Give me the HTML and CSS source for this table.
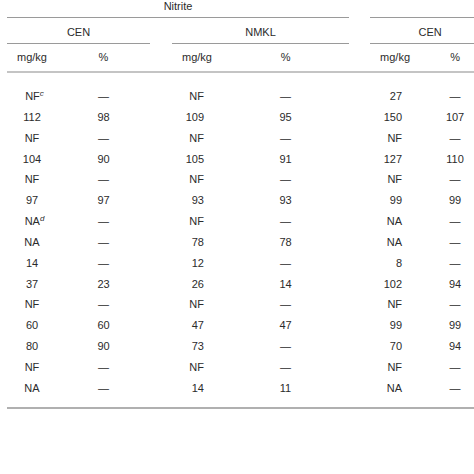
FILE: index.html
```html
<!DOCTYPE html>
<html>
<head>
<meta charset="utf-8">
<link rel="stylesheet" href="styles.css">
</head>
<body>
<div class="frame">
<table class="tbl">
  <colgroup>
    <col class="w-a"><col class="w-b"><col class="w-gap1"><col class="w-a"><col class="w-d"><col class="w-gap2"><col class="w-a"><col class="w-f">
  </colgroup>
  <thead>
    <tr class="r1">
      <th colspan="5" class="ruled">Nitrite</th>
      <th class="gap"></th>
      <th colspan="2" class="ruled"></th>
    </tr>
    <tr class="r2">
      <th colspan="2" class="ruled">CEN</th>
      <th class="gap"></th>
      <th colspan="2" class="ruled">NMKL</th>
      <th class="gap"></th>
      <th colspan="2" class="ruled">CEN</th>
    </tr>
    <tr class="r3">
      <th>mg/kg</th><th>%</th><th></th><th>mg/kg</th><th>%</th><th></th><th>mg/kg</th><th>%</th>
    </tr>
  </thead>
  <tbody>
    <tr><td>NF<sup class="fn">c</sup></td><td>—</td><td></td><td class="rt">NF</td><td>—</td><td></td><td class="rt">27</td><td>—</td></tr>
    <tr><td>112</td><td>98</td><td></td><td class="rt">109</td><td>95</td><td></td><td class="rt">150</td><td>107</td></tr>
    <tr><td>NF</td><td>—</td><td></td><td class="rt">NF</td><td>—</td><td></td><td class="rt">NF</td><td>—</td></tr>
    <tr><td>104</td><td>90</td><td></td><td class="rt">105</td><td>91</td><td></td><td class="rt">127</td><td>110</td></tr>
    <tr><td>NF</td><td>—</td><td></td><td class="rt">NF</td><td>—</td><td></td><td class="rt">NF</td><td>—</td></tr>
    <tr><td>97</td><td>97</td><td></td><td class="rt">93</td><td>93</td><td></td><td class="rt">99</td><td>99</td></tr>
    <tr><td>NA<sup class="fn">d</sup></td><td>—</td><td></td><td class="rt">NF</td><td>—</td><td></td><td class="rt">NA</td><td>—</td></tr>
    <tr><td>NA</td><td>—</td><td></td><td class="rt">78</td><td>78</td><td></td><td class="rt">NA</td><td>—</td></tr>
    <tr><td>14</td><td>—</td><td></td><td class="rt">12</td><td>—</td><td></td><td class="rt">8</td><td>—</td></tr>
    <tr><td>37</td><td>23</td><td></td><td class="rt">26</td><td>14</td><td></td><td class="rt">102</td><td>94</td></tr>
    <tr><td>NF</td><td>—</td><td></td><td class="rt">NF</td><td>—</td><td></td><td class="rt">NF</td><td>—</td></tr>
    <tr><td>60</td><td>60</td><td></td><td class="rt">47</td><td>47</td><td></td><td class="rt">99</td><td>99</td></tr>
    <tr><td>80</td><td>90</td><td></td><td class="rt">73</td><td>—</td><td></td><td class="rt">70</td><td>94</td></tr>
    <tr><td>NF</td><td>—</td><td></td><td class="rt">NF</td><td>—</td><td></td><td class="rt">NF</td><td>—</td></tr>
    <tr><td>NA</td><td>—</td><td></td><td class="rt">14</td><td>11</td><td></td><td class="rt">NA</td><td>—</td></tr>
  </tbody>
</table>
</div>
</body>
</html>
```
FILE: styles.css
```css
html, body {
  margin: 0;
  padding: 0;
  background: #fff;
}
.frame {
  width: 474px;
  height: 474px;
  overflow: hidden;
}
.tbl {
  margin-left: 7px;
  border-collapse: separate;
  border-spacing: 0;
  table-layout: fixed;
  width: 483px;
  font-family: "Liberation Sans", Arial, sans-serif;
  font-size: 11px;
  color: #2b2b2b;
}
.w-a { width: 50px; }
.w-b { width: 93px; }
.w-gap1 { width: 22px; }
.w-d { width: 127px; }
.w-gap2 { width: 21px; }
.w-f { width: 70px; }

.tbl th {
  font-weight: normal;
  text-align: center;
  line-height: 13px;
  padding: 0;
  white-space: nowrap;
}
.tbl th.ruled {
  border-bottom: 1px solid #9a9a9a;
}
.r1 th { padding: 0 0 4px; }
.r2 th { padding: 8px 0 4px; }
.r3 th {
  padding: 7px 0 7px;
  border-bottom: 2px solid #c4c4c4;
}
.tbl td {
  padding: 0;
  line-height: 20.85px;
  text-align: center;
  white-space: nowrap;
}
.tbl td.rt {
  text-align: right;
  padding-right: 18px;
}
.tbl tbody tr:first-child td { padding-top: 13px; }
.tbl tbody tr:last-child td {
  padding-bottom: 8px;
  border-bottom: 2px solid #b0b0b0;
}
.tbl tbody tr:first-child td.rt,
.tbl tbody tr:last-child td.rt { padding-right: 18px; }
.fn {
  font-size: 8px;
  font-style: italic;
  line-height: 0;
  vertical-align: 4px;
  margin-right: -5px;
}
```
